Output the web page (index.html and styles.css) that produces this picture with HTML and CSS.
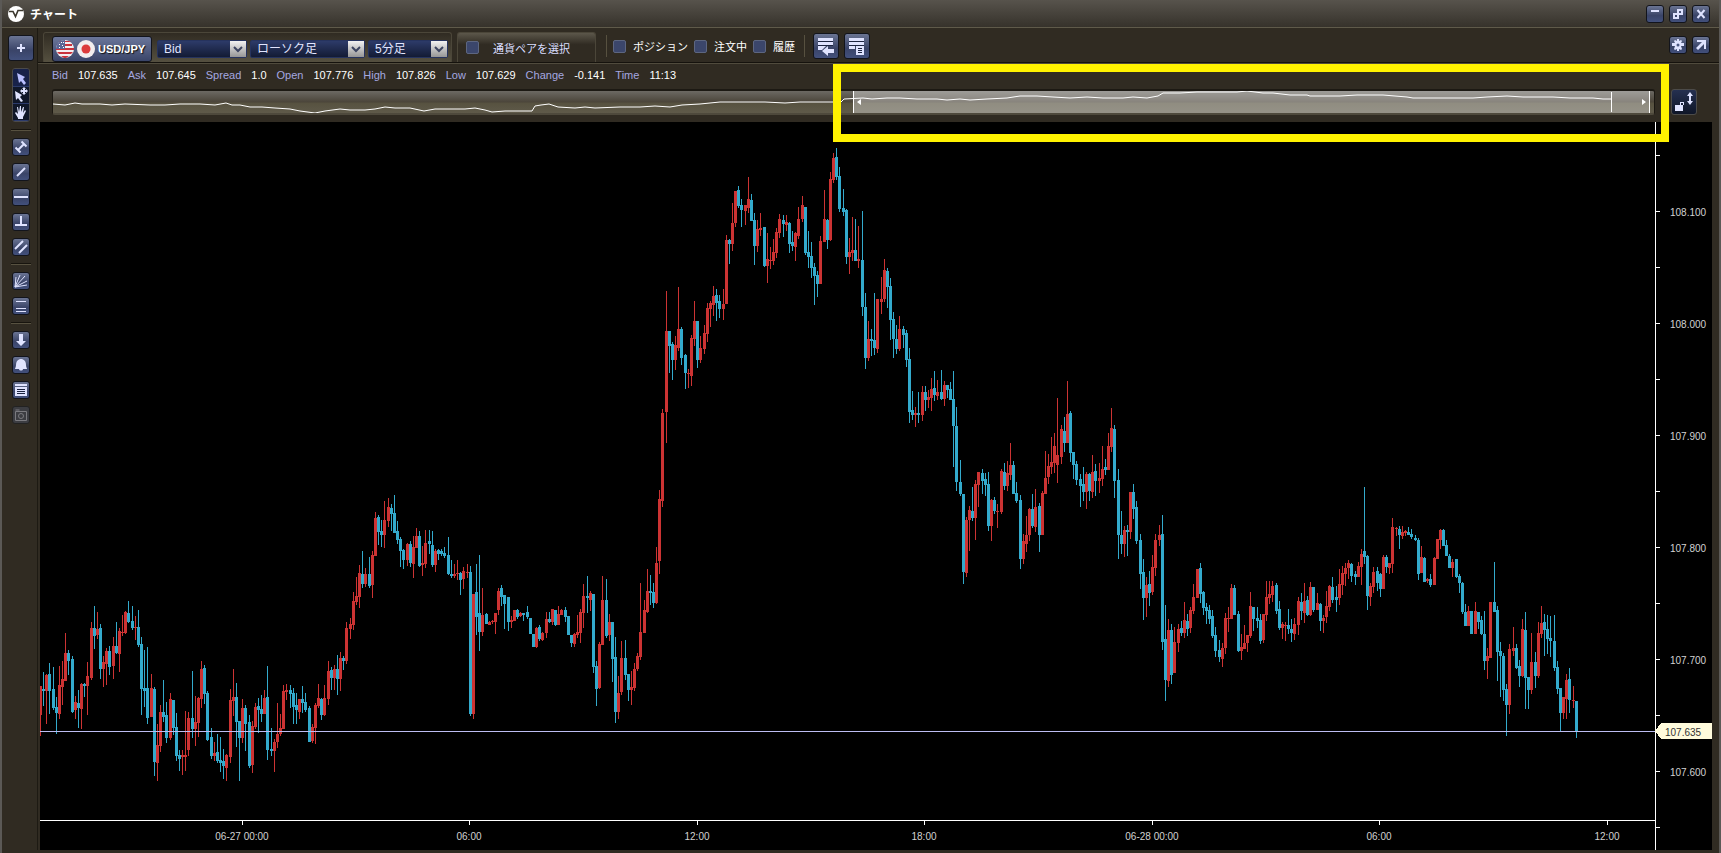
FILE: index.html
```html
<!DOCTYPE html>
<html lang="ja">
<head>
    <meta charset="UTF-8">
    <meta name="viewport" content="width=device-width, initial-scale=1.0">
    <title>チャート</title>
    <link rel="stylesheet" href="styles.css">
</head>
<body>
    <header class="titlebar">
        <svg class="logo" viewBox="0 0 16 16"><circle cx="8" cy="8" r="8" fill="#fff"/><path d="M1 5.5h4l2.500 5L10 4.500h5" fill="none" stroke="#3c382e" stroke-width="1.600"/></svg>
        <h1>チャート</h1>
        <div class="buttons">
            <button class="btn" aria-label="最小化"><svg viewBox="0 0 18 18"><path d="M5 5h8v2H5z"/></svg></button>
            <button class="btn" aria-label="元に戻す"><svg viewBox="0 0 18 18"><path fill-rule="evenodd" d="M8 4h6v6h-4v4H4V8h4zM10 6v2h2V6zM6 10v2h2v-2z"/></svg></button>
            <button class="btn" aria-label="閉じる"><svg viewBox="0 0 18 18"><path class="line" d="M5.500 5l7 8M12.500 5l-7 8"/></svg></button>
        </div>
    </header>

    <div class="window">
        <!-- Drawing tools -->
        <nav class="sidebar">
            <button class="btn big" aria-label="追加"><svg viewBox="0 0 26 26"><path d="M12 9h2v3h3v2h-3v3h-2v-3H9v-2h3z"/></svg></button>
            <div class="tools">
                <button class="active" aria-label="選択"><svg viewBox="0 0 16 17"><path d="M4 3l8 4-2 2 3 4-2 2-3-4-2 2z"/></svg></button>
                <button aria-label="移動"><svg viewBox="0 0 16 17"><path d="M2 4l7 4-2 2 3 4-2 1-3-4-2 2zM11 0l2 2h-1v1h1V2l2 2-2 2V5h-1v1h1l-2 2-2-2h1V5H9v1L7 4l2-2v1h1V2H9z"/></svg></button>
                <button aria-label="手のひら"><svg viewBox="0 0 16 17"><path d="M5 14L2 9l1-1 2 2-1-7h1l1 5 1-6h1v6l2-5h1l-1 6 2-3 1 1-3 6v2H5z"/></svg></button>
            </div>
            <hr>
            <button class="btn" aria-label="両端矢印"><svg viewBox="0 0 18 18"><path class="line" d="M6 12l6-6M3.500 9.500l5 5M9.500 3.500l5 5"/></svg></button>
            <button class="btn" aria-label="トレンドライン"><svg viewBox="0 0 18 18"><path class="line" d="M5 13l8-8"/></svg></button>
            <button class="btn" aria-label="水平線"><svg viewBox="0 0 18 18"><path d="M2 8h14v2H2z"/></svg></button>
            <button class="btn" aria-label="垂直線"><svg viewBox="0 0 18 18"><path d="M8 3h2v8h5v2H3v-2h5z"/></svg></button>
            <button class="btn" aria-label="平行線"><svg viewBox="0 0 18 18"><path class="line" d="M3 11l8-8M7 15l8-8"/></svg></button>
            <hr>
            <button class="btn" aria-label="ファン"><svg viewBox="0 0 18 18"><path class="thin" d="M3 15l1-10M3 15L8 3M3 15l10-11M3 15l12-6M3 15l12-2"/></svg></button>
            <button class="btn" aria-label="リトレースメント"><svg viewBox="0 0 18 18"><path d="M4 4h10v1H4zM4 11h10v1H4zM4 14h10v1H4z"/></svg></button>
            <hr>
            <button class="btn" aria-label="矢印"><svg viewBox="0 0 18 18"><path d="M7 3h4v7h3l-5 5-5-5h3z"/></svg></button>
            <button class="btn" aria-label="アラート"><svg viewBox="0 0 18 18"><path d="M8 3h2c3 1 4 3 4 6 0 2 1 3 1 4h-4c0 2-4 2-4 0H3c0-1 1-2 1-4 0-3 1-5 4-6z"/></svg></button>
            <button class="btn" aria-label="一覧"><svg viewBox="0 0 18 18"><path d="M3 3h12v2H3zM3 6h12v9H3z"/><path class="dark" d="M5 8.500h8M5 10.500h8M5 12.500h8"/></svg></button>
            <button class="btn" aria-label="画像保存" disabled><svg viewBox="0 0 18 18"><path class="cam" d="M3.500 5.500h11v9h-11zM3.500 4h4"/><circle class="cam" cx="9" cy="10" r="2.500"/></svg></button>
        </nav>

        <main class="main">
            <div class="toolbar">
                <div class="panel pair-panel">
                    <button class="pair">
                        <svg viewBox="0 0 18 18"><circle cx="9" cy="9" r="9" fill="#f4eef0"/><path d="M2 4h14v2H1zM0 8h18v2H0zM1 12h16l-2 2H3zM5 16h8l-3 2H8zM5 1h8l2 1H3z" fill="#c8323c"/><path d="M9 0v9H0C0 4 4 0 9 0z" fill="#5a6696"/><path d="M3 4h1v1H3zM5 2h1v1H5zM6 5h1v1H6zM3 7h1v1H3zM7 2h1v1H7zM7 7h1v1H7z" fill="#fff"/></svg>
                        <svg viewBox="0 0 18 18"><circle cx="9" cy="9" r="9" fill="#f2eeee"/><circle cx="9" cy="9" r="4.500" fill="#dc3c3c"/></svg>
                        <span>USD/JPY</span>
                    </button>
                    <span class="select price"><select aria-label="価格"><option>Bid</option></select><i><svg viewBox="0 0 16 16"><path d="M4 6l4 4 4-4"/></svg></i></span>
                    <span class="select kind"><select aria-label="チャート種類"><option>ローソク足</option></select><i><svg viewBox="0 0 16 16"><path d="M4 6l4 4 4-4"/></svg></i></span>
                    <span class="select period"><select aria-label="足種"><option>5分足</option></select><i><svg viewBox="0 0 16 16"><path d="M4 6l4 4 4-4"/></svg></i></span>
                </div>
                <div class="panel compare-panel">
                    <label><input type="checkbox">通貨ペアを選択</label>
                </div>
                <div class="options">
                    <label><input type="checkbox">ポジション</label>
                    <label><input type="checkbox">注文中</label>
                    <label><input type="checkbox">履歴</label>
                </div>
                <div class="orders">
                    <button class="btn big" aria-label="注文"><svg viewBox="0 0 26 26"><path d="M5 5h15v3H5zM5 9h15v3H5zM5 13h8l-4 4H5zM9 18l6-5v3h6v4h-6v3z"/><path class="dark" d="M5 8.500h15M5 12.500h15"/></svg></button>
                    <button class="btn big" aria-label="注文一覧"><svg viewBox="0 0 26 26"><path d="M5 5h15v3H5zM5 9h15v3H5zM5 13h6v3H5zM12 13h8v9h-8z"/><path class="dark" d="M5 8.500h15M5 12.500h15M14 15.500h4M14 17.500h4M14 19.500h4"/></svg></button>
                </div>
                <div class="buttons">
                    <button class="btn" aria-label="設定"><svg viewBox="0 0 18 18"><path d="M8 3h2v2l2-1 1 1-1 2h3v3h-3l1 3-1 1-2-1v2H8v-2l-2 1-1-1 1-3H3V7h3L5 5l1-1 2 1z"/><circle cx="9" cy="9" r="1.500" fill="#4a5680"/></svg></button>
                    <button class="btn" aria-label="別ウィンドウ"><svg viewBox="0 0 18 18"><path d="M5 4h9v9h-2V8l-6 6-2-2 6-6H5z"/></svg></button>
                </div>
            </div>

            <dl class="quote">
                <dt>Bid</dt><dd>107.635</dd>
                <dt>Ask</dt><dd>107.645</dd>
                <dt>Spread</dt><dd>1.0</dd>
                <dt>Open</dt><dd>107.776</dd>
                <dt>High</dt><dd>107.826</dd>
                <dt>Low</dt><dd>107.629</dd>
                <dt>Change</dt><dd>-0.141</dd>
                <dt>Time</dt><dd>11:13</dd>
            </dl>

            <div class="range">
                <div class="overview">
                    <svg viewBox="53 91 1601 22" preserveAspectRatio="none">
                        <rect x="853" y="91" width="797" height="22" fill="#fff" fill-opacity=".34"/>
                        <polyline points="53,104 65,105 75,103 82,104 100,104 112,105 125,104 150,105 165,105 180,104 200,104 215,105 226,103 232,105 240,105 250,107 262,107 275,108 290,109 300,111 315,113 325,111 340,109 350,110 365,110 375,109 385,107 395,108 410,108 424,111 435,109 465,109 475,108 485,110 492,112 505,111 532,111 535,106 541,105 549,104 552,105 558,107 575,108 585,107 595,108 620,107 640,107 655,106 670,107 682,105 700,104 720,102 765,102 785,103 800,102 841,102 844,99 863,98 872,99 887,98 900,98 917,99 937,99 947,100 960,99 970,100 987,99 1007,98 1020,96 1037,96 1053,97 1070,98 1087,97 1103,98 1123,98 1133,97 1147,98 1158,96 1163,93 1180,93 1197,92 1213,92 1237,92 1247,91 1263,93 1273,93 1290,95 1307,95 1310,96 1340,96 1357,95 1383,95 1407,97 1413,98 1440,98 1473,98 1487,97 1507,96 1523,97 1553,97 1570,98 1593,98 1603,99 1611,99"/>
                        <path d="M853 91h1v22h-1zM1611 92h1v20h-1zM1649 91h1v22h-1zM861 99v6l-4-3zM1642 99v6l4-3z" fill="#fff"/>
                    </svg>
                </div>
                <button class="lock" aria-label="縦軸ロック"><svg viewBox="0 0 26 26"><path d="M19 3l3 4h-2v5h2l-3 4-3-4h2V7h-2zM4 16h8v6H4zM9 16v-3h4v3h-1v-2h-2v2z"/></svg></button>
            </div>

            <svg class="chart" id="chart" role="img" aria-label="USD/JPY 5分足"></svg>
        </main>
    </div>
    <div class="highlight"></div>

    <script src="chart.js"></script>
</body>
</html>
```
FILE: styles.css
```css
* {
    box-sizing: border-box;
}

body {
    margin: 0;
    min-height: 100vh;
    display: flex;
    flex-direction: column;
    position: relative;
    padding-bottom: 3px;
    border-left: 2px solid #5b5956;
    border-right: 2px solid #5b5956;
    background-color: #302b22;
    color: #fff;
    font-family: "Liberation Sans", "Noto Sans CJK JP", sans-serif;
    font-size: 11px;
}

button, select, input {
    font: inherit;
    color: inherit;
    margin: 0;
    padding: 0;
    border: none;
}

button {
    cursor: pointer;
}

svg {
    display: block;
}

/* Title bar */
.titlebar {
    display: flex;
    align-items: center;
    gap: 6px;
    height: 28px;
    padding: 0 9px 0 6px;
    background: linear-gradient(#57534c, #36322b);
    border-bottom: 1px solid #5f5a4a;
}

.titlebar h1 {
    margin: 0;
    font-size: 12px;
    font-weight: bold;
}

.logo {
    width: 16px;
    height: 16px;
}

.buttons {
    display: flex;
    gap: 5px;
    margin-left: auto;
}

.btn {
    width: 18px;
    height: 18px;
    flex: none;
    border: 1px solid #12141c;
    border-radius: 3px;
    background: linear-gradient(#6a7493, #3a4468 60%, #42507c);
}

.btn svg {
    width: 18px;
    height: 18px;
    margin: -1px;
}

.btn.big {
    width: 26px;
    height: 26px;
}

.btn.big svg {
    width: 26px;
    height: 26px;
}

.btn:disabled {
    background: #3c3d42;
    border-color: #222;
}

.btn path, .tools path, .lock path {
    fill: #dfe3ff;
}

.btn .line, .btn .thin {
    fill: none;
    stroke: #dfe3ff;
    stroke-width: 2;
}

.btn .thin {
    stroke-width: 1;
}

.btn .dark {
    fill: none;
    stroke: #1c2440;
}

.btn .cam {
    fill: none;
    stroke: #7b7b80;
}

/* Left tools */
.window {
    flex: 1;
    display: flex;
}

.sidebar {
    display: flex;
    flex-direction: column;
    align-items: center;
    gap: 7px;
    width: 36px;
    padding: 7px 0 0 3px;
    border-right: 1px solid #1d1a13;
}

.sidebar hr {
    width: 20px;
    height: 2px;
    margin: 0;
    border: none;
    border-top: 1px solid #17140e;
    border-bottom: 1px solid #575140;
}

.tools {
    display: flex;
    flex-direction: column;
    width: 18px;
    border: 1px solid #4b4a4a;
    border-radius: 3px;
    overflow: hidden;
}

.tools button {
    height: 17px;
    background: #101729;
    box-shadow: inset 0 -1px #2c3b6c;
}

.tools .active {
    height: 18px;
    background: #18224a;
}

.tools .active path {
    fill: #b9bfff;
}

.tools svg {
    width: 16px;
    height: 17px;
}

.main {
    flex: 1;
    min-width: 0;
    display: flex;
    flex-direction: column;
}

/* Toolbar */
.toolbar {
    display: flex;
    height: 36px;
    padding: 4px 9px 0 5px;
    border-bottom: 1px solid #504b3d;
    box-shadow: inset 0 -1px #15120d;
}

.panel {
    display: flex;
    align-items: center;
    margin-bottom: 1px;
    border: 1px solid #4b4639;
    border-bottom: none;
    border-radius: 3px 3px 0 0;
}

.pair-panel {
    gap: 3px;
    padding: 2px 3px 0 8px;
    background: linear-gradient(#302b22, #555040);
}

.pair {
    display: flex;
    align-items: center;
    gap: 3px;
    width: 100px;
    height: 26px;
    margin-right: 2px;
    padding-left: 3px;
    border: 1px solid #12141c;
    border-radius: 3px;
    background: linear-gradient(#6b769a, #3a4569);
    font-weight: bold;
    text-shadow: 1px 1px 1px #111;
}

.pair svg {
    width: 18px;
    height: 18px;
    flex: none;
}

.select {
    display: grid;
    height: 18px;
    border: 1px solid #26335e;
    border-radius: 2px;
    background: linear-gradient(#2d3b69, #131b34);
}

.select select, .select i {
    grid-area: 1 / 1;
}

.select select {
    appearance: none;
    width: 100%;
    padding-left: 6px;
    background: none;
    color: #e1e5ff;
    font-size: 12px;
    line-height: 16px;
}

.select option {
    background: #131b34;
}

.select i {
    justify-self: end;
    width: 16px;
    background: linear-gradient(#f2f2f2, #969696);
    pointer-events: none;
}

.select path {
    fill: none;
    stroke: #3c4460;
    stroke-width: 2;
}

.price {
    width: 90px;
}

.kind {
    width: 115px;
}

.period {
    width: 80px;
}

.compare-panel {
    width: 139px;
    margin-left: 5px;
    padding-left: 8px;
    background: linear-gradient(#5c574b, #302b22 40%);
    color: #dadfff;
}

.compare-panel label {
    gap: 14px;
}

label {
    display: flex;
    align-items: center;
    gap: 7px;
    white-space: nowrap;
}

input[type="checkbox"] {
    appearance: none;
    width: 13px;
    height: 13px;
    border: 1px solid #5d6680;
    border-radius: 2px;
    background: #3b466b;
}

input[type="checkbox"]:checked {
    background: #b9bfff;
}

.options {
    display: flex;
    align-items: center;
    gap: 6px;
    height: 22px;
    margin: 3px 0 0 10px;
    padding: 0 9px 0 6px;
    border-left: 1px solid #575140;
    border-right: 1px solid #575140;
}

.orders {
    display: flex;
    gap: 5px;
    margin: 1px 0 0 8px;
}

.toolbar .buttons {
    padding-top: 4px;
}

/* Quote line */
.quote {
    display: flex;
    gap: 10px;
    margin: 0;
    padding-left: 14px;
    line-height: 22px;
    white-space: nowrap;
}

.quote dt {
    color: #a5a8e0;
}

.quote dd {
    margin: 0;
}

.range {
    display: flex;
    gap: 16px;
    padding: 3px 22px 7px 14px;
}

.overview {
    flex: 1;
    height: 26px;
    border: 1px solid #1c1913;
    border-width: 2px 1px;
    border-bottom-color: #4e493c;
    border-radius: 3px;
    background: linear-gradient(#6c6963, #4b453a 50%, #575240 55%, #5f5a4a);
}

.overview svg {
    width: 100%;
    height: 22px;
}

.overview polyline {
    fill: none;
    stroke: #fff;
    vector-effect: non-scaling-stroke;
}

.lock {
    width: 26px;
    height: 26px;
    border: 1px solid #4c4b49;
    border-radius: 3px;
    background: linear-gradient(#253050, #0f1628);
}

.lock svg {
    width: 26px;
    height: 26px;
    margin: -1px;
}

/* Chart */
.chart {
    flex: 1;
    min-height: 300px;
    margin: 0 7px 0 2px;
    background: #000;
    font-size: 10px;
    shape-rendering: crispEdges;
}

.chart .up {
    fill: #cc3333;
}

.chart .down {
    fill: #33aacc;
}

.chart .axis {
    fill: #fff;
}

.chart .label {
    fill: #d2d2d2;
}

.chart .last {
    fill: #bdbdf2;
}

.chart .tag {
    fill: #fffbdc;
}

.chart .tag-text {
    fill: #333;
}

.highlight {
    position: absolute;
    top: 64px;
    right: 50px;
    left: 831px;
    height: 78px;
    border: 8px solid #fff200;
    pointer-events: none;
}
```
FILE: chart.js
```js
// Each bar: direction (r = up, b = down), high, body top, body bottom, low.
// Values are counted down from the top of their run.
const runs = [
    { top: 358, bars: `
r206,206,235,256 b192,209,211,226 r194,195,211,244 b183,194,211,234 b187,209,228,230 b217,227,233,254
r186,205,234,239 r181,199,207,225 r153,173,201,201 b170,173,181,195 b176,179,232,233 r216,222,230,239
b210,223,228,248 r203,204,229,249 b203,204,206,217 r182,196,206,235 r142,148,198,200 b126,148,156,169
r132,149,155,159 b144,148,189,199 r176,182,189,207 r168,171,184,205 b166,171,187,195 r157,166,186,199
b142,166,173,174 r148,151,174,192 r135,152,153,156 r131,132,153,154 b121,133,142,143 b126,141,148,150
r136,147,148,160 b130,147,165,167 b157,164,209,235 b170,208,211,227 b167,208,238,244 r194,208,237,237
b207,209,282,296 r244,265,283,301 r225,232,266,272 b200,232,237,242 b222,235,258,263 r213,219,258,260
b220,220,248,255 b233,247,276,281 b270,275,279,291 r270,275,277,295 r231,275,277,291 r232,238,270,276
b191,238,249,258 r216,242,249,266 r217,218,243,257 r181,189,219,228 b185,188,214,224 b211,213,260,261
b248,257,276,279 r262,273,276,281 b254,272,281,283 b257,280,283,292 b269,281,286,299 r274,275,288,301
r209,220,277,283 r189,217,221,236 b203,217,242,267 b241,241,258,301 r219,228,258,263 b225,228,244,271
b235,242,286,288 r241,246,285,293 r223,227,247,249 b218,226,230,253 b215,229,234,242 r210,218,234,234
b186,217,270,280 b248,269,271,276 r259,262,271,292 r223,254,262,268 r234,248,254,256 r205,211,249,249
r204,210,212,220 b205,210,214,228 b208,213,227,244 b213,225,230,244 r219,219,232,239 b206,219,223,233
b213,222,230,232 b226,228,262,262 r244,247,261,263 r223,225,248,264 r204,218,226,228 b218,219,235,240
r205,218,235,236 r181,191,219,225 b187,190,198,210 r185,189,198,210 b175,189,199,215 r172,178,199,211
b176,178,181,190 r142,148,181,184 r138,144,149,159 r112,121,145,150 r97,116,122,125 r85,93,117,128
b71,94,104,108 r88,94,104,107 b77,94,106,108 r71,75,105,118 r32,38,76,76 b35,37,52,65
b40,51,55,67 r21,40,55,68 r18,27,41,47 b24,28,34,51 b15,33,53,53 b41,51,60,64
b57,59,71,87 b69,70,80,89 r63,64,80,86 b61,64,83,87 r56,67,84,98 r48,56,68,68
b51,56,86,87 r66,83,85,96 r50,63,84,88 b50,61,64,74 b51,65,85,87 r69,71,85,92
b69,70,74,80 b69,71,74,76 b67,73,76,78 b57,75,94,95 b80,94,96,98 r84,94,96,98
r80,93,94,100 b92,93,100,115 r87,91,99,109 r84,92,93,98 b86,92,234,236 r114,114,234,239
b84,112,137,155 b75,133,152,171 r108,135,152,156 b133,134,144,144 r141,142,145,145 r140,141,142,144
r133,133,142,154 r108,111,130,135 b105,108,117,126 b115,115,124,149 b117,117,142,151 r136,140,142,148
r130,130,141,141 b129,130,137,139 r132,133,136,137 b133,133,135,141 b126,132,137,139 b138,138,154,154
b154,154,167,167 r147,148,167,168 b145,147,159,161 r152,153,160,161 r132,139,153,158 b132,139,142,143
r129,129,142,145 b130,130,145,146 r126,134,145,145 r129,130,135,135 b127,130,137,142 b136,136,155,155
b155,155,163,167 r153,154,164,167 r135,152,155,158 r129,132,153,163 r104,116,133,148 b96,116,118,133
r111,113,120,131 b114,114,187,193 b181,186,209,226 r162,164,208,209 r96,120,165,165 b99,120,156,158
r134,142,155,161 b142,142,179,202 b157,177,232,243 r196,213,232,239 r161,178,212,215 b160,178,195,200
b194,194,210,221 r191,207,210,225 r183,189,208,211 r173,176,189,191 r103,152,177,180 r120,130,153,153
r89,111,132,133 b95,111,113,125 b103,112,123,128 r67,83,123,124 r10,19,81,94` },
    { top: 8, bars: `
r279,283,371,377 r161,201,282,313 b201,201,216,243 b212,214,230,250 r206,215,230,240 r157,199,218,221
b197,199,228,235 b224,225,243,259 r239,243,244,258 r205,208,246,256 r171,191,209,216 b191,191,230,238
r206,218,230,233 r195,203,219,224 r173,178,204,212 r171,173,179,197 r156,166,175,186 b159,165,173,191
b165,171,179,188 r159,174,179,190 r105,110,174,174 b109,110,114,134 r73,93,114,121 r61,61,93,97
b56,60,76,78 b69,75,80,97 r75,75,81,95 r47,69,78,83 b64,70,91,91 b83,90,116,135
r90,99,116,122 r83,98,100,106 b97,97,136,137 r103,129,136,153 r117,130,131,139 r109,122,131,135
r98,102,123,128 r84,89,103,108 b85,90,94,107 r85,92,95,101 b92,93,114,123 b101,112,116,121
r102,103,117,131 r77,89,106,109 r66,75,89,92 b77,77,123,125 b101,122,127,138 b112,126,138,148
b133,137,146,175 b141,145,154,167 r106,111,154,154 r60,89,112,112 b89,90,110,119 r42,49,110,111
r23,28,50,53 b18,27,47,50 b37,46,79,82 b59,78,82,86 b79,80,127,134 r108,122,127,144
r87,120,123,131 b89,120,131,131 r96,129,131,138 b81,130,177,186 b163,177,228,239 r191,209,228,231
b199,209,211,226 b163,210,218,225 r169,169,219,223 r147,169,172,184 r129,140,169,172 b138,141,157,178
b148,156,190,210 b182,189,209,228 b195,209,219,224 r186,199,219,221 b196,199,205,218 b200,203,230,237
b218,229,282,293 b261,280,285,290 r277,283,285,297 b262,283,285,293 r256,262,285,291 b256,262,270,281
r260,267,270,278 r248,259,268,281 b241,258,265,271` },
    { top: 228, bars: `
r30,42,46,50 b20,42,49,50 r31,35,49,56 b35,35,40,48 b32,39,50,50 b21,49,76,117
b57,76,132,141 b110,132,144,146 b144,144,222,234 r167,170,223,227 r156,160,170,201 b137,161,168,171
r130,134,168,190 r122,122,135,157 b119,123,131,144 b123,129,135,146 b122,134,176,181 r149,150,176,191
b147,150,161,164 r154,161,162,178 r119,121,162,164 b113,122,136,140 r111,123,136,141 r93,115,125,130
b111,115,144,144 b132,143,151,153 b145,150,209,219 r184,191,209,214 r166,185,194,202 r158,159,185,191
b144,159,176,178 r139,157,177,182 b153,156,185,202 r141,143,185,185 r101,128,144,144 r104,116,127,134
r87,112,117,124 r83,96,113,123 r48,105,115,133 r75,79,107,114 b67,81,93,102 r31,64,93,93
b61,63,103,112 b102,102,115,129 b111,114,130,135 b124,129,136,157 b117,134,142,151 r122,124,142,159
b123,124,141,151 r105,122,142,148 b114,121,131,146 r113,128,131,143 r96,119,129,136 b109,117,120,125
r83,96,120,120 r58,78,97,102 b75,79,131,148 b119,130,185,209 b161,185,194,204 r176,180,194,207
b175,180,182,206 r142,142,182,189 b134,142,159,169 b151,157,191,194 b184,190,224,239 b209,222,248,270
r227,235,248,267 b221,234,243,256 r205,217,242,245 r184,190,218,226 r175,185,190,196 b165,184,292,300
b255,289,330,351 r269,280,331,337 b274,280,325,334 r277,292,323,323 r274,279,293,302 b271,278,283,286
r252,270,283,288 b264,271,279,286 r257,260,278,283 r234,247,261,264 r219,219,248,248 b213,218,244,253
b241,242,258,265 b253,257,261,274 b255,260,269,274 b260,266,286,288 b277,285,301,307 b290,300,307,312
r293,298,309,317 r263,268,298,304 r257,268,269,282 r234,238,269,269 b235,238,265,265 b261,264,301,302
r284,297,301,310 r275,293,299,299 r285,285,293,302 r242,256,286,288 b257,257,269,281 b257,268,271,278
b264,270,291,294 r264,264,290,293 r231,247,265,271 r231,244,248,254 r231,236,245,252 b233,235,261,264
b251,259,278,280 r272,274,278,289 r272,275,276,291 b259,275,279,284 b269,279,283,292 r268,274,284,290
r247,251,275,285 b243,252,261,270 r233,251,263,273 b246,250,265,266 r232,237,265,266 b237,237,260,262
r243,253,260,260 b253,254,271,281 r265,268,271,283 r241,256,267,273 r235,236,257,261` },
    { top: 358, bars: `
b97,107,120,123 b106,117,120,132 r89,104,118,125 r86,93,105,115 r83,88,94,106 r80,83,88,99
b83,84,96,102 b91,94,97,105 r82,86,97,97 r69,74,87,105 b7,71,77,84 b75,76,116,130
r103,106,117,126 r87,92,107,113 b87,91,103,111 b93,94,109,117 r75,77,109,109 b75,77,87,93
r83,83,88,94 r38,47,84,93 r47,48,49,56 b46,49,55,69 r46,52,56,59 r50,51,53,56
b47,52,55,55 b49,54,57,59 b55,58,60,61 b58,60,94,100 r66,77,93,93 b77,78,102,102
r98,99,101,103 b94,99,105,107 r77,78,105,105 r59,59,79,79 r49,50,60,69 b49,50,66,66
b60,65,76,76 b74,76,88,88 r79,82,88,97 b79,79,97,98 b94,96,103,113 b102,103,132,134
b124,132,146,146 r126,131,146,146 b131,131,154,154 r122,131,154,154 b132,132,142,149 b136,140,154,155
b131,154,181,190 r168,176,181,199 r122,122,178,178 b82,122,132,132 b126,130,172,201 b162,171,176,217
b173,176,210,221 b204,209,225,256 r164,169,225,234 r147,168,171,176 b164,168,188,189 b180,186,196,207
r139,149,196,197 b132,150,198,229 b197,197,210,229 r153,182,210,214 b172,182,196,208 r142,153,196,198
r126,143,154,158 b134,142,150,176 b135,149,159,174 b136,158,161,177 b135,161,188,191 b181,187,209,214
b208,208,233,251 r217,217,233,239 r194,200,219,239 b188,199,220,233 r206,220,221,228 b221,221,251,258` }
];

const svg = document.getElementById('chart');

function add(name, attrs, text) {
    const el = document.createElementNS('http://www.w3.org/2000/svg', name);
    for (const key in attrs) el.setAttribute(key, attrs[key]);
    if (text) el.textContent = text;
    svg.appendChild(el);
}

function rect(cls, x, y, width, height) {
    add('rect', { class: cls, x, y, width, height });
}

function draw() {
    svg.innerHTML = '';
    const w = svg.clientWidth;
    const h = svg.clientHeight;
    const right = w - 57;
    const bottom = h - 30;
    const sx = right / 1615;
    const sy = bottom / 698;

    // Candles
    let i = 0;
    runs.forEach(run => {
        run.bars.trim().split(/\s+/).forEach(bar => {
            const cls = bar[0] === 'r' ? 'up' : 'down';
            const [high, top, low, end] = bar.slice(1).split(',').map(v => Math.round((Number(v) + run.top) * sy));
            const x = Math.floor((0.46 + i * 3.16) * sx);
            rect(cls, x, high, 1, Math.max(end - high, 1));
            rect(cls, x - 1, top, 3, Math.max(low - top, 1));
            i++;
        });
    });

    // Price axis
    rect('axis', right, 0, 1, h);
    for (let n = 0; n < 13; n++) {
        const y = Math.round((33 + n * 56) * sy);
        if (y < h) rect('axis', right, y, 5, 1);
        if (n % 2 && n < 12) {
            add('text', { class: 'label', x: right + 15, y: y + 5 }, (108.15 - n * 0.05).toFixed(3));
        }
    }

    // Time axis
    rect('axis', 0, bottom, right, 1);
    ['06-27 00:00', '06:00', '12:00', '18:00', '06-28 00:00', '06:00', '12:00'].forEach((time, n) => {
        const x = Math.floor((202 + n * 227.5) * sx);
        rect('axis', x, bottom, 1, 5);
        add('text', { class: 'label', x: x, y: bottom + 20, 'text-anchor': 'middle' }, time);
    });

    // Last price
    const y = Math.round(609 * sy);
    rect('last', 0, y, right, 1);
    add('path', { class: 'tag', d: `M${right} ${y}l6 -8H${w}v16H${right + 6}z` });
    add('text', { class: 'tag-text', x: right + 10, y: y + 5 }, '107.635');
}

draw();
window.addEventListener('resize', draw);
```
